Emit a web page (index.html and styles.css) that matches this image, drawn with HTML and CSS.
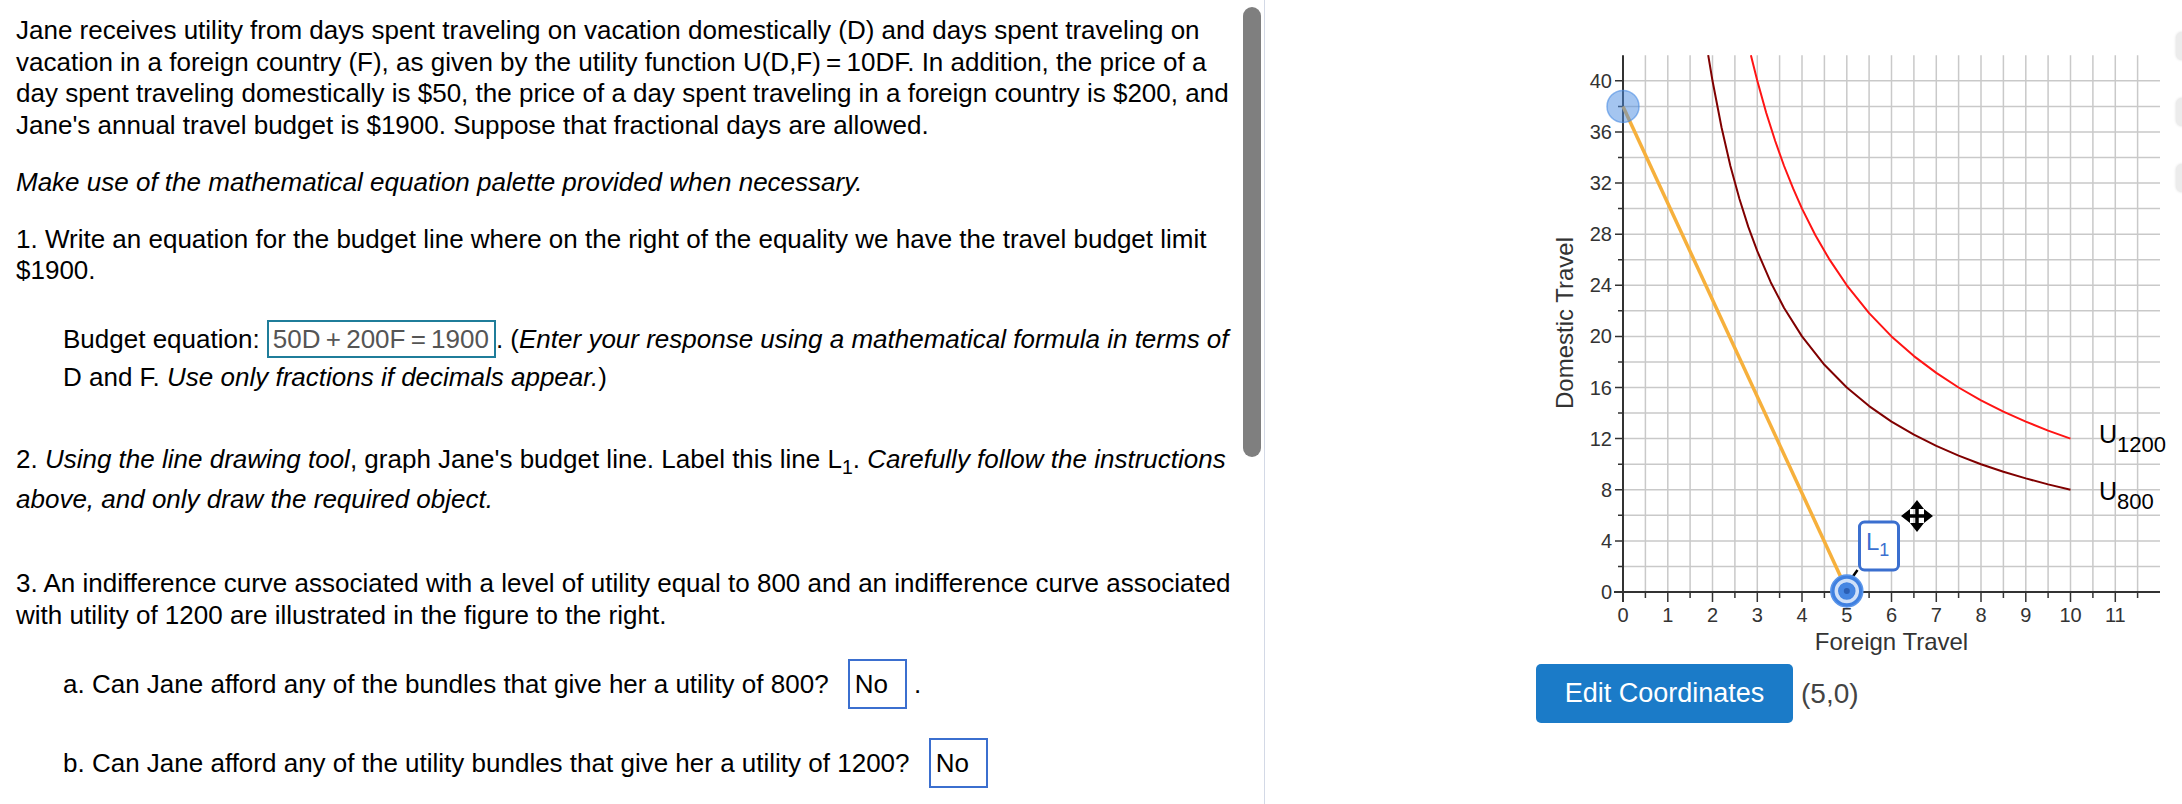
FILE: index.html
```html
<!DOCTYPE html>
<html lang="en">
<head>
  <meta charset="UTF-8">
  <title>Budget Line and Indifference Curves</title>
  <link rel="stylesheet" href="styles.css">
</head>
<body>
  <div class="page">
    <div class="question-pane">
      <p class="intro">Jane receives utility from days spent traveling on vacation domestically (D) and days spent traveling on vacation in a foreign country (F), as given by the utility function U(D,F)&thinsp;=&thinsp;10DF. In addition, the price of a day spent traveling domestically is $50, the price of a day spent traveling in a foreign country is $200, and Jane's annual travel budget is $1900. Suppose that fractional days are allowed.</p>
      <p class="note"><em>Make use of the mathematical equation palette provided when necessary.</em></p>
      <p class="step-one">1. Write an equation for the budget line where on the right of the equality we have the travel budget limit $1900.</p>
      <p class="budget">Budget equation: <span class="math-box">50D + 200F = 1900</span>. (<em>Enter your response using a mathematical formula in terms of</em> D and F. <em>Use only fractions if decimals appear.</em>)</p>
      <p class="step-two">2. <em>Using the line drawing tool</em>, graph Jane's budget line. Label this line L<sub>1</sub>. <em>Carefully follow the instructions above, and only draw the required object.</em></p>
      <p class="step-three">3. An indifference curve associated with a level of utility equal to 800 and an indifference curve associated with utility of 1200 are illustrated in the figure to the right.</p>
      <p class="part part-a">a. Can Jane afford any of the bundles that give her a utility of 800? <span class="answer">No</span> .</p>
      <p class="part part-b">b. Can Jane afford any of the utility bundles that give her a utility of 1200? <span class="answer">No</span></p>
    </div>

    <div class="scroll-rail"><div class="scroll-thumb"></div></div>

    <div class="graph-pane">
      <div class="canvas-row">
        <svg class="graph" width="676" height="630" viewBox="1500 30 676 630">
          <!-- grid: half days foreign, two days domestic -->
          <path class="grid" d="M1645.4 55.2V592M1667.8 55.2V592M1690.1 55.2V592M1712.5 55.2V592M1734.9 55.2V592M1757.3 55.2V592M1779.6 55.2V592M1802 55.2V592M1824.4 55.2V592M1846.8 55.2V592M1869.1 55.2V592M1891.5 55.2V592M1913.9 55.2V592M1936.3 55.2V592M1958.6 55.2V592M1981 55.2V592M2003.4 55.2V592M2025.8 55.2V592M2048.1 55.2V592M2070.5 55.2V592M2092.9 55.2V592M2115.3 55.2V592M2137.6 55.2V592"/>
          <path class="grid" d="M1623 566.4H2160M1623 540.9H2160M1623 515.3H2160M1623 489.8H2160M1623 464.2H2160M1623 438.6H2160M1623 413.1H2160M1623 387.5H2160M1623 362H2160M1623 336.4H2160M1623 310.8H2160M1623 285.3H2160M1623 259.7H2160M1623 234.2H2160M1623 208.6H2160M1623 183H2160M1623 157.5H2160M1623 131.9H2160M1623 106.4H2160M1623 80.8H2160"/>

          <!-- axes and ticks -->
          <path class="axis" d="M1623 55.2V602M1614 592H2160"/>
          <path class="tick" d="M1618 566.4H1623M1615 540.9H1623M1618 515.3H1623M1615 489.8H1623M1618 464.2H1623M1615 438.6H1623M1618 413.1H1623M1615 387.5H1623M1618 362H1623M1615 336.4H1623M1618 310.8H1623M1615 285.3H1623M1618 259.7H1623M1615 234.2H1623M1618 208.6H1623M1615 183H1623M1618 157.5H1623M1615 131.9H1623M1618 106.4H1623M1615 80.8H1623"/>
          <path class="tick" d="M1645.4 592V598M1667.8 592V602M1690.1 592V598M1712.5 592V602M1734.9 592V598M1757.3 592V602M1779.6 592V598M1802 592V602M1824.4 592V598M1846.8 592V602M1869.1 592V598M1891.5 592V602M1913.9 592V598M1936.3 592V602M1958.6 592V598M1981 592V602M2003.4 592V598M2025.8 592V602M2048.1 592V598M2070.5 592V602M2092.9 592V598M2115.3 592V602M2137.6 592V598"/>

          <g class="y-labels">
            <text x="1612" y="592">0</text>
            <text x="1612" y="540.9">4</text>
            <text x="1612" y="489.8">8</text>
            <text x="1612" y="438.6">12</text>
            <text x="1612" y="387.5">16</text>
            <text x="1612" y="336.4">20</text>
            <text x="1612" y="285.3">24</text>
            <text x="1612" y="234.2">28</text>
            <text x="1612" y="183">32</text>
            <text x="1612" y="131.9">36</text>
            <text x="1612" y="80.8">40</text>
          </g>
          <g class="x-labels">
            <text x="1623" y="622">0</text>
            <text x="1667.8" y="622">1</text>
            <text x="1712.5" y="622">2</text>
            <text x="1757.3" y="622">3</text>
            <text x="1802" y="622">4</text>
            <text x="1846.8" y="622">5</text>
            <text x="1891.5" y="622">6</text>
            <text x="1936.3" y="622">7</text>
            <text x="1981" y="622">8</text>
            <text x="2025.8" y="622">9</text>
            <text x="2070.5" y="622">10</text>
            <text x="2115.3" y="622">11</text>
          </g>
          <text class="axis-title" x="1891.5" y="649.5">Foreign Travel</text>
          <text class="axis-title" transform="translate(1573 323) rotate(-90)">Domestic Travel</text>

          <!-- indifference curves, D = U / (10F) -->
          <polyline class="curve-800" points="1708.2,55.2 1712.5,80.8 1721.5,127.3 1730.4,166 1739.4,198.8 1748.3,226.9 1757.3,251.2 1770.7,282.2 1784.1,308 1802,336.4 1824.4,364.8 1846.8,387.5 1869.1,406.1 1891.5,421.6 1913.9,434.7 1936.3,445.9 1958.6,455.6 1981,464.2 2003.4,471.7 2025.8,478.4 2048.1,484.4 2070.5,489.8"/>
          <polyline class="curve-1200" points="1750.9,55.2 1757.3,80.8 1766.2,112.8 1775.2,141 1784.1,166 1793.1,188.4 1802,208.6 1815.4,235.3 1828.9,258.6 1846.8,285.3 1869.1,313.1 1891.5,336.4 1913.9,356.1 1936.3,372.9 1958.6,387.5 1981,400.3 2003.4,411.6 2025.8,421.6 2048.1,430.6 2070.5,438.6"/>
          <text class="curve-label" x="2099" y="443">U<tspan class="sub" dy="9">1200</tspan></text>
          <text class="curve-label" x="2099" y="500">U<tspan class="sub" dy="9">800</tspan></text>

          <!-- budget line L1 -->
          <line class="budget-line" x1="1623" y1="106.4" x2="1846.8" y2="590"/>
          <circle class="start-point" cx="1623" cy="106.4" r="16"/>
          <line class="label-link" x1="1852.5" y1="577" x2="1857.5" y2="570"/>
          <rect class="line-tag" x="1859.5" y="522" width="39" height="48" rx="5"/>
          <text class="line-tag-text" x="1866" y="550">L<tspan class="sub" dy="6">1</tspan></text>
          <g class="end-point">
            <circle cx="1846.8" cy="591" r="16" fill="#3f80e0" stroke="#5b96ea" stroke-width="1.5"/>
            <circle cx="1846.8" cy="591" r="10.5" fill="none" stroke="#cfe0f8" stroke-width="3.5"/>
            <circle cx="1846.8" cy="591" r="8" fill="#4586e2"/>
            <circle cx="1846.8" cy="591" r="3" fill="#2b5fb4"/>
          </g>

          <!-- move cursor -->
          <g class="move-cursor">
            <path class="move-shaft" d="M1906 516H1928M1917 505V527"/>
            <path d="M1901 516l9-7v14zM1933 516l-9-7v14zM1917 500l-7 9h14zM1917 532l-7-9h14z"/>
          </g>
        </svg>
        <div class="palette">
          <span></span>
          <span></span>
          <span></span>
        </div>
      </div>
      <div class="coord-row">
        <button type="button" class="edit-btn">Edit Coordinates</button>
        <span class="coord">(5,0)</span>
      </div>
    </div>
  </div>
</body>
</html>
```

FILE: styles.css
```css
body {
  margin: 0;
  font-family: "Liberation Sans", Arial, sans-serif;
  background-color: white;
  color: black;
  overflow: hidden;
}
.page {
  display: flex;
  height: 804px;
}
.question-pane {
  width: 1243px;
  flex-shrink: 0;
  box-sizing: border-box;
  padding: 15px 3px 0 16px;
  font-size: 26px;
  line-height: 31.7px;
}
.question-pane p {
  margin: 0;
}
.note {
  margin-top: 25px !important;
}
.step-one {
  margin-top: 25px !important;
}
.budget {
  margin-top: 33.5px !important;
  margin-left: 47px !important;
  line-height: 38px;
}
.math-box {
  display: inline-block;
  border: 2px solid #1f7d9a;
  padding: 0 5px 0 4px;
  line-height: 34px;
  word-spacing: -2px;
  color: #555;
}
.step-two {
  margin-top: 42.7px !important;
  line-height: 40px;
}
sub {
  font-size: 0.75em;
  line-height: 0;
}
.step-three {
  margin-top: 49px !important;
}
.part {
  margin-left: 47px !important;
  line-height: 50px;
}
.part-a {
  margin-top: 27.6px !important;
}
.part-b {
  margin-top: 28.4px !important;
}
.answer {
  display: inline-block;
  width: 59px;
  height: 50px;
  box-sizing: border-box;
  border: 2px solid #3b6fcf;
  padding-left: 5px;
  line-height: 46px;
  margin-left: 12px;
}
.scroll-rail {
  width: 21px;
  flex-shrink: 0;
  border-right: 1px solid #d3d9e6;
}
.scroll-thumb {
  width: 18px;
  height: 450px;
  margin-top: 7px;
  border-radius: 9px;
  background-color: #7f7f7f;
}
.graph-pane {
  flex: 1;
  min-width: 0;
}
.canvas-row {
  display: flex;
  align-items: flex-start;
}
.graph {
  display: block;
  flex-shrink: 0;
  margin: 30px 0 0 235px;
}
.grid {
  fill: none;
  stroke: #c9c9c9;
  stroke-width: 1.5;
}
.axis {
  fill: none;
  stroke: #333;
  stroke-width: 2;
}
.tick {
  fill: none;
  stroke: #333;
  stroke-width: 1.5;
}
.y-labels text {
  font-size: 20px;
  fill: #333;
  text-anchor: end;
  dominant-baseline: central;
}
.x-labels text {
  font-size: 20px;
  fill: #333;
  text-anchor: middle;
}
.axis-title {
  font-size: 24px;
  fill: #333;
  text-anchor: middle;
}
.curve-800 {
  fill: none;
  stroke: #800000;
  stroke-width: 2;
  stroke-linejoin: round;
}
.curve-1200 {
  fill: none;
  stroke: #ff1414;
  stroke-width: 2;
  stroke-linejoin: round;
}
.curve-label {
  font-size: 25px;
  fill: black;
}
.curve-label .sub {
  font-size: 22px;
}
.budget-line {
  stroke: #f6b03c;
  stroke-width: 3.5;
}
.start-point {
  fill: rgba(74, 140, 226, 0.5);
  stroke: rgba(74, 140, 226, 0.6);
  stroke-width: 1.5;
}
.label-link {
  stroke: black;
  stroke-width: 2.5;
}
.line-tag {
  fill: white;
  stroke: #3b6fcf;
  stroke-width: 3;
}
.line-tag-text {
  font-size: 24px;
  fill: #3b6fcf;
}
.line-tag-text .sub {
  font-size: 18px;
}
.move-cursor {
  fill: black;
}
.move-shaft {
  fill: none;
  stroke: black;
  stroke-width: 3.5;
}
.palette {
  display: flex;
  flex-direction: column;
  padding-top: 32px;
}
.palette span {
  width: 40px;
  height: 28px;
  margin-bottom: 38px;
  border-radius: 6px;
  background-color: #ececec;
  box-shadow: 0 0 3px rgba(0, 0, 0, 0.15);
}
.coord-row {
  display: flex;
  align-items: center;
  margin: 4px 0 0 271px;
}
.edit-btn {
  width: 257px;
  height: 59px;
  padding: 0;
  font-family: inherit;
  font-size: 27px;
  color: white;
  background-color: #1b7bc8;
  border: none;
  border-radius: 5px;
  cursor: pointer;
}
.coord {
  margin-left: 8px;
  font-size: 28px;
  color: #444;
}
```
